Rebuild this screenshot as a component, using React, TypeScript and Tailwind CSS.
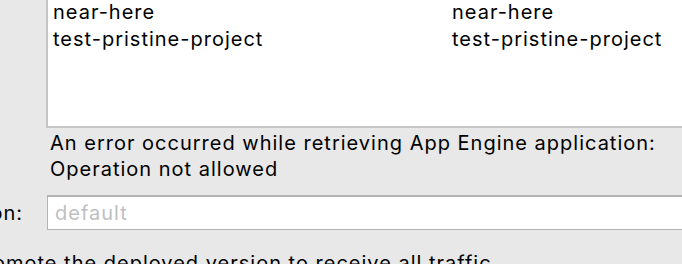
const font = { fontFamily: 'Inter, "Liberation Sans", sans-serif' };

export default function App() {
  return (
    <div
      className="w-[682px] h-[264px] overflow-hidden bg-[#e8e8e8] text-[20px] tracking-[1px] text-black"
      style={font}
    >
      {/* project list table, only its lower part is visible */}
      <div className="ml-[46px] mr-[-20px] h-[128px] border-l-2 border-b-2 border-[#c6c6c6] bg-white">
        <div className="flex h-[27px] items-end pl-[5px] leading-none">
          <span className="w-[399px] pb-[5px]">near-here</span>
          <span className="pb-[5px]">near-here</span>
        </div>
        <div className="flex h-[27px] items-end pl-[5px] leading-none">
          <span className="w-[399px] pb-[5px]">test-pristine-project</span>
          <span className="pb-[5px]">test-pristine-project</span>
        </div>
      </div>

      <div className="ml-[50px] mt-[2px] leading-[26px]">
        <div>An error occurred while retrieving App Engine application:</div>
        <div>Operation not allowed</div>
      </div>

      <div className="mt-[13px] flex items-center">
        <div className="flex w-[23px] shrink-0 justify-end whitespace-nowrap">Version:</div>
        <div className="ml-[24px] flex h-[35px] flex-1 items-center border border-t-2 border-r-0 border-[#b4b4b4] bg-white pl-[7px] text-[#c0c0c0]">
          default
        </div>
      </div>

      <div className="ml-[-29px] mt-[18px] whitespace-nowrap">
        Promote the deployed version to receive all traffic
      </div>
    </div>
  );
}
